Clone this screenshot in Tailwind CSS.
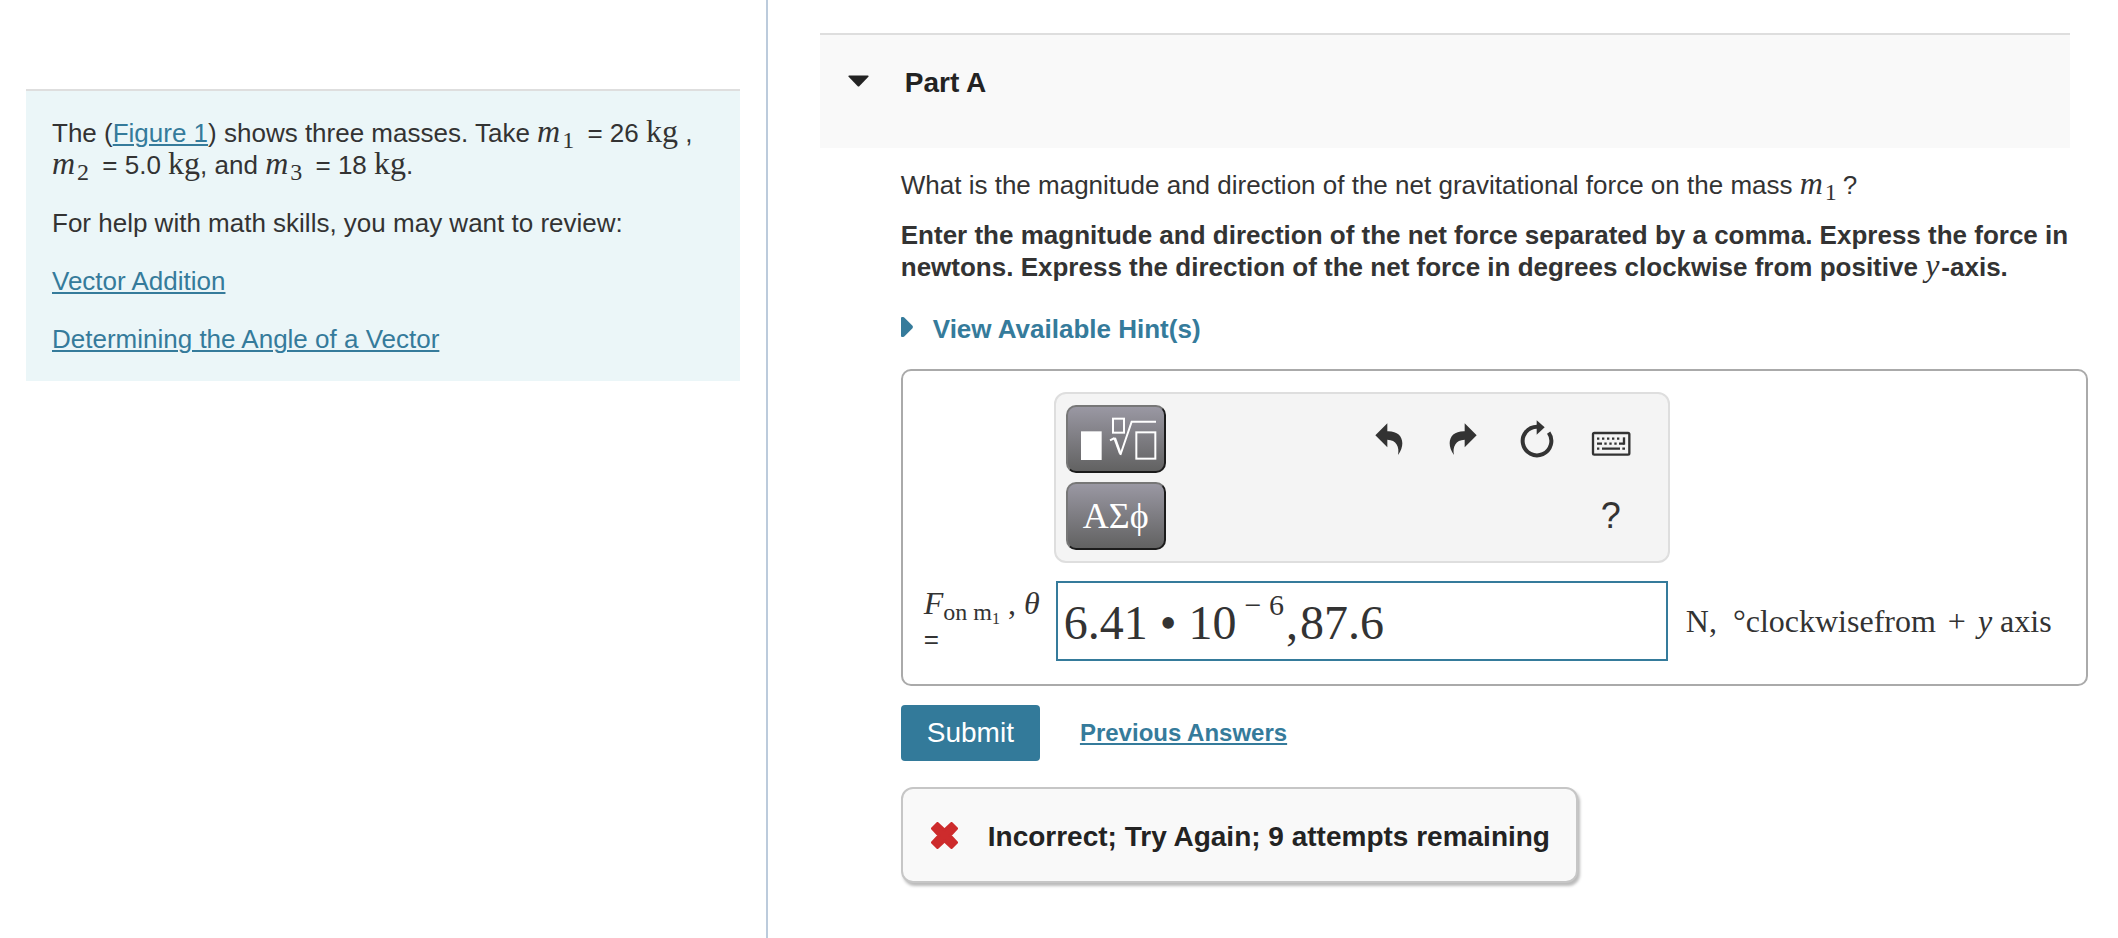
<!DOCTYPE html>
<html lang="en">
<head>
  <meta charset="UTF-8" />
  <meta name="viewport" content="width=device-width, initial-scale=1" />
  <title>Part A</title>
  <script src="https://cdn.jsdelivr.net/npm/@tailwindcss/browser@4"></script>
</head>
<body class="bg-white text-[#333] text-[26px] leading-8 font-['Liberation_Sans',Arial,sans-serif]">
  <div class="grid grid-cols-[29fr_51fr] min-h-screen">

    <!-- Problem statement -->
    <aside class="border-r-2 border-[#bccbdc] pl-[26px] pr-[26px] pt-[89px]">
      <div class="bg-[#ebf6f8] border-t-2 border-[#dedede] px-[26px] pt-[26px] pb-[26px] space-y-[26px]">
        <p>The (<a href="#figure" class="text-[#357b9b] underline underline-offset-2 decoration-2">Figure 1</a>) shows three masses. Take
          <span class="mr-1.5 whitespace-nowrap font-['Liberation_Serif',serif] text-[32px] leading-0"><i class="mr-0.5">m</i><sub class="text-2xl leading-0">1</sub></span> = 26
          <span class="font-['Liberation_Serif',serif] text-[32px] leading-0">kg</span> ,
          <span class="mr-1.5 whitespace-nowrap font-['Liberation_Serif',serif] text-[32px] leading-0"><i class="mr-0.5">m</i><sub class="text-2xl leading-0">2</sub></span> = 5.0
          <span class="font-['Liberation_Serif',serif] text-[32px] leading-0">kg</span>, and
          <span class="mr-1.5 whitespace-nowrap font-['Liberation_Serif',serif] text-[32px] leading-0"><i class="mr-0.5">m</i><sub class="text-2xl leading-0">3</sub></span> = 18
          <span class="font-['Liberation_Serif',serif] text-[32px] leading-0">kg</span>.</p>
        <p>For help with math skills, you may want to review:</p>
        <p><a href="#vectors" class="text-[#357b9b] underline underline-offset-2 decoration-2">Vector Addition</a></p>
        <p><a href="#angle" class="text-[#357b9b] underline underline-offset-2 decoration-2">Determining the Angle of a Vector</a></p>
      </div>
    </aside>

    <main class="pl-[52px] pr-[30px] pt-[33px] pb-6">
      <header class="mr-[18px] h-[115px] bg-[#f9f9f9] border-t-2 border-[#dedede] pl-7 pt-8">
        <h2>
          <button type="button" aria-expanded="true" class="flex items-center gap-9 text-[28px] font-bold text-[#232323]">
            <svg class="w-[21px] h-3 mb-1" viewBox="0 0 21 12" aria-hidden="true"><path d="M1 .5h19q1 .5.4 1.300L11.500 11q-1 1-2 0L.6 1.800Q0 1 1 .5z" fill="#232323"/></svg>
            Part A
          </button>
        </h2>
      </header>

      <div class="pl-[81px] pt-[21px]">
        <div class="mr-[16px]">
          <p>What is the magnitude and direction of the net gravitational force on the mass
            <span class="whitespace-nowrap"><span class="mr-1.5 font-['Liberation_Serif',serif] text-[32px] leading-0"><i class="mr-0.5">m</i><sub class="text-2xl leading-0">1</sub></span>?</span></p>
          <p class="mt-[18px] font-bold">Enter the magnitude and direction of the net force separated by a comma. Express the force in newtons. Express the direction of the net force in degrees clockwise from positive <i class="mr-0.5 font-['Liberation_Serif',serif] text-[32px] leading-0 font-normal">y</i>-axis.</p>
        </div>

        <button type="button" aria-expanded="false" class="mt-[30px] flex items-center gap-5 font-bold text-[#357b9b]">
          <svg class="w-3 h-5 mb-1" viewBox="0 0 12 20" aria-hidden="true"><path d="M0 1q0-1 1-1h1q1 0 1.500.8l8 8q.8 1.200 0 2.400l-8 8q-.5.8-1.500.8h-1q-1 0-1-1z" fill="#357b9b"/></svg>
          View Available Hint(s)
        </button>

        <!-- Answer entry -->
        <section class="mt-6 border-2 border-[#aaa] rounded-[10px] px-[21px] pt-[21px] pb-[23px] grid grid-cols-[130px_minmax(0,616px)_1fr] gap-y-[18px]">
          <div class="col-start-2 flex justify-between bg-[#f4f4f4] border-2 border-[#dedede] rounded-xl pl-2.5 pr-5 py-[11px]">
            <div class="flex flex-col gap-[9px]">
              <button type="button" aria-label="Templates" class="w-[100px] h-[68px] flex items-center justify-center rounded-[10px] border-2 border-t-[#777] border-l-[#777] border-r-[#1c1c1c] border-b-[#1c1c1c] bg-linear-to-b from-[#9a98a3] to-[#626262]">
                <svg class="w-[83px] h-[47px]" viewBox="553 170 249 141" fill="none" stroke="#fff" stroke-width="6" aria-hidden="true">
                  <rect x="574" y="216" width="62" height="86" fill="#fff" stroke="none"/>
                  <rect x="670" y="178" width="33" height="42"/>
                  <path d="M661 243l14-7" />
                  <path d="M675 236l17 47" stroke-width="8"/>
                  <path d="M692 287l34-100h73"/>
                  <rect x="740" y="219" width="57" height="79"/>
                </svg>
              </button>
              <button type="button" aria-label="Symbols" class="w-[100px] h-[68px] flex items-center justify-center rounded-[10px] border-2 border-t-[#777] border-l-[#777] border-r-[#1c1c1c] border-b-[#1c1c1c] bg-linear-to-b from-[#9a98a3] to-[#626262] font-['Liberation_Serif',serif] text-4xl text-white">ΑΣϕ</button>
            </div>
            <div class="flex flex-col items-end gap-[9px]">
              <div class="flex">
                <button type="button" aria-label="Undo" class="w-[74px] h-[68px] flex items-center justify-center">
                  <svg class="w-7 h-8" viewBox="220 191 84 96" aria-hidden="true"><path d="M221 228l36-36v24c29-1 45 14 45 36q0 18-13 35c5-25-5-45-32-46v23z" fill="#333"/></svg>
                </button>
                <button type="button" aria-label="Redo" class="w-[74px] h-[68px] flex items-center justify-center">
                  <svg class="w-7 h-8" viewBox="452 191 84 96" aria-hidden="true"><path d="M535 228l-36-36v24c-29-1-45 14-45 36q0 18 13 35c-5-25 5-45 32-46v23z" fill="#333"/></svg>
                </button>
                <button type="button" aria-label="Reset" class="w-[74px] h-[68px] flex items-center justify-center">
                  <svg class="w-[34px] h-[38px]" viewBox="660 184 102 114" aria-hidden="true"><path d="M711 204a43 43 0 1 0 35 18" fill="none" stroke="#333" stroke-width="12"/><path d="M710 185l24 21-24 22z" fill="#333"/></svg>
                </button>
                <button type="button" aria-label="Keyboard shortcuts" class="w-[74px] h-[68px] flex items-center justify-center">
                  <svg class="w-10 h-[34px]" viewBox="873 190 120 102" aria-hidden="true">
                    <rect x="879" y="223" width="109" height="65" rx="4" fill="none" stroke="#333" stroke-width="7"/>
                    <path d="M891 240h7m8 0h7m8 0h7m8 0h7m8 0h7M891 255h15m7 0h7m8 0h7m8 0h7m7 0h16M891 270h7m8 0h54m7 0h8" fill="none" stroke="#333" stroke-width="7"/>
                    <path d="M972 236v22" stroke="#333" stroke-width="7"/>
                  </svg>
                </button>
              </div>
              <button type="button" aria-label="Help" class="w-[74px] h-[68px] flex items-center justify-center text-4xl">?</button>
            </div>
          </div>

          <div id="answer-label" class="row-start-2 self-center font-['Liberation_Serif',serif] text-[32px] leading-9">
            <div class="whitespace-nowrap"><i>F</i><sub class="text-2xl leading-0">on m<sub class="text-base leading-0">1</sub></sub> , <i>θ</i></div>
            <div class="font-['Liberation_Sans',Arial,sans-serif] text-[26px]">=</div>
          </div>
          <div role="textbox" contenteditable="true" aria-labelledby="answer-label" class="row-start-2 col-start-2 mx-0.5 h-20 border-2 border-[#357b9b] pl-1.5 pt-1 flex items-center whitespace-nowrap overflow-hidden outline-none font-['Liberation_Serif',serif] text-5xl"><div>6.41<span class="mx-3">•</span>10<sup class="-top-6 ml-2 text-3xl leading-0">− 6</sup><span class="mx-0.5">,</span>87.6</div></div>
          <div class="row-start-2 col-start-3 self-center pl-4 whitespace-nowrap font-['Liberation_Serif',serif] text-[32px]">N,&nbsp; °clockwisefrom<span class="mx-1"> + </span><i>y</i> axis</div>
        </section>

        <div class="mt-[19px] flex items-center gap-10">
          <button type="submit" class="h-14 px-[26px] rounded-sm bg-[#337a9a] text-white text-[28px]">Submit</button>
          <a href="#previous" class="text-2xl font-bold text-[#357b9b] underline underline-offset-2 decoration-2">Previous Answers</a>
        </div>

        <div role="status" class="mt-[26px] w-fit h-24 flex items-center gap-[30px] rounded-xl border-2 border-[#c6c6c6] bg-[#f9f9f9] pl-7 pr-[26px] pt-1 shadow-[2px_3px_3px_#bbb] text-[28px] font-bold text-[#232323]">
          <svg class="w-[27px] h-[27px] mb-1" viewBox="0 0 27 27" aria-hidden="true"><path d="M6.500 1.500l7 6.500 7-6.500 5 5-6.500 7 6.500 7-5 5-7-6.500-7 6.500-5-5 6.500-7-6.500-7z" fill="#cd2b2c" stroke="#cd2b2c" stroke-width="3" stroke-linejoin="round"/></svg>
          Incorrect; Try Again; 9 attempts remaining
        </div>
      </div>
    </main>
  </div>
</body>
</html>
